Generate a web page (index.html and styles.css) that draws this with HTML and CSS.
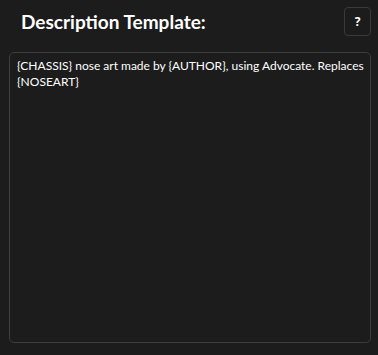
FILE: index.html
```html
<!DOCTYPE html>
<html>
<head>
<meta charset="utf-8">
<link rel="stylesheet" href="styles.css">
</head>
<body>
<div class="panel">
  <div class="header">
    <h2 class="title">Description Template:</h2>
    <button class="help">?</button>
  </div>
  <div class="editor">{CHASSIS} nose art made by {AUTHOR}, using Advocate. Replaces {NOSEART}</div>
</div>
</body>
</html>
```
FILE: styles.css
```css
html, body {
  margin: 0;
  padding: 0;
  background: #1c1c1c;
  height: 100%;
}
.panel {
  box-sizing: border-box;
  height: 355px;
  padding: 7px 7px 12px 9px;
  display: flex;
  flex-direction: column;
  font-family: "Lato", "Noto Sans", sans-serif;
}
.header {
  display: flex;
  align-items: center;
  justify-content: space-between;
  height: 29px;
}
.title {
  margin: 0 0 0 12px;
  font-size: 19px;
  font-weight: 700;
  color: #ffffff;
}
.help {
  box-sizing: border-box;
  width: 27px;
  height: 29px;
  padding: 0;
  background: #1c1c1c;
  border: 1px solid #3a3a3c;
  border-radius: 4px;
  color: #ffffff;
  font-family: "Noto Sans", sans-serif;
  font-weight: 700;
  font-size: 12px;
}
.editor {
  flex: 1;
  margin-top: 16px;
  border: 1px solid #3d3d40;
  border-radius: 5px;
  padding: 5px 6px 5px 7px;
  color: #ffffff;
  font-size: 12px;
  line-height: 16px;
}
```
